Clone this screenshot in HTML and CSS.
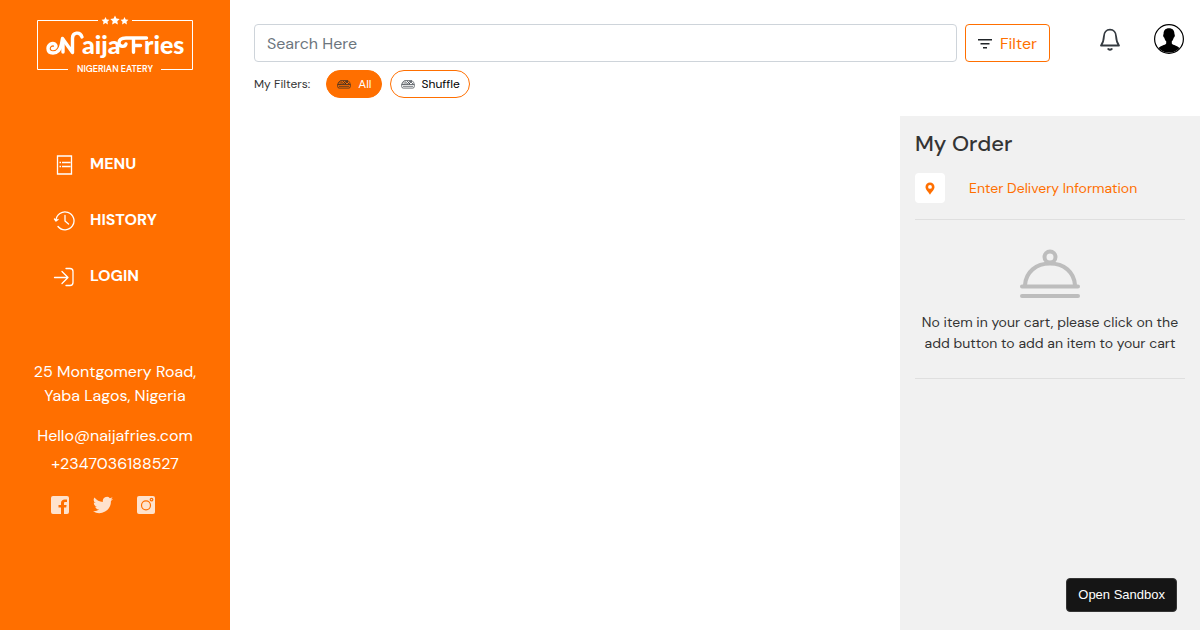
FILE: index.html
```html
<!DOCTYPE html>
<html lang="en">
<head>
  <meta charset="UTF-8">
  <meta name="viewport" content="width=device-width, initial-scale=1.0">
  <title>Naija Fries</title>
  <link rel="stylesheet" href="styles.css">
</head>
<body>
  <div class="app">
    <aside class="sidebar">
      <a class="logo" href="#" aria-label="Naija Fries">
        <svg width="156" height="62" viewBox="0 0 156 62" fill="none">
          <!-- Frame -->
          <path d="M61 5.500H.5V54.500H31M124 54.500H155.500V5.500H95" stroke="#fff"/>
          <!-- Stars -->
          <path fill="#fff" d="M78 .5l1.400 3 3.300.4-2.400 2.300.6 3.300-2.900-1.600-2.900 1.600.6-3.300-2.400-2.300 3.300-.4z"/>
          <path fill="#fff" d="M68.500 2l1.200 2.400 2.700.4-1.900 1.900.4 2.700-2.400-1.300-2.400 1.300.4-2.700-1.900-1.900 2.700-.4zM87.500 2l1.200 2.400 2.700.4-1.900 1.900.4 2.700-2.400-1.300-2.400 1.300.4-2.700-1.900-1.900 2.700-.4z"/>
          <!-- Swashes of the N and the F -->
          <g stroke="#fff" stroke-width="3.400" stroke-linecap="round" stroke-linejoin="round">
            <path d="M15.500 33.500c3 .3 4.500-2.500 2.500-4.300-3-2.200-7 .8-7 4.300 0 3.500 2.500 4.500 5 4.500 5 0 7.500-4 8.500-9l1-5.500 10 14V23c0-5.500 7.500-7 9.500-1"/>
            <path d="M26 25v12"/>
            <path d="M109.500 23H89c-4.500 0-7 2-7 5 0 4 6 4.500 7 1M96.500 24v13.300M97 30.500h6.500"/>
          </g>
          <text class="logo-name" x="45" y="39">aija</text>
          <text class="logo-name" x="107" y="39">ries</text>
          <text class="logo-sub" x="78" y="57" text-anchor="middle">NIGERIAN EATERY</text>
        </svg>
      </a>

      <nav class="nav">
        <a href="#">
          <svg width="22" height="22" viewBox="0 0 22 22" fill="none" stroke="currentColor" stroke-width="1.300"><path d="M4.500 3h14v18h-14zM9 9.500h8.500M9 13.500h8.500M6.500 9.500H8M6.500 13.500H8"/></svg>
          Menu
        </a>
        <a href="#">
          <svg width="22" height="22" viewBox="0 0 22 22" fill="none" stroke="currentColor" stroke-width="1.300" stroke-linecap="round" stroke-linejoin="round"><path d="M3 11.500a9 9 0 1 1 2 6M1.500 10L3 12l2-1.500M12 6.500v5.500l3.500 3"/></svg>
          History
        </a>
        <a href="#">
          <svg width="22" height="22" viewBox="0 0 22 22" fill="none" stroke="currentColor" stroke-width="1.300" stroke-linecap="round" stroke-linejoin="round"><path d="M1.500 12.500h13M9 6.500l6 6-6 6M13 3.500h4q3 0 3 3v11q0 3-3 3h-4"/></svg>
          Login
        </a>
      </nav>

      <address class="contact">
        <p>25 Montgomery Road,<br>Yaba Lagos, Nigeria</p>
        <a href="mailto:Hello@naijafries.com">Hello@naijafries.com</a>
        <a href="tel:+2347036188527">+2347036188527</a>
      </address>

      <div class="social">
        <a href="#" aria-label="Facebook">
          <svg width="20" height="20" viewBox="0 0 20 20"><path fill="currentColor" d="M3 1h14a2 2 0 0 1 2 2v14a2 2 0 0 1-2 2h-3v-6.500h2.200l.4-2.500H14V8.400c0-.9.400-1.400 1.400-1.400H17V4.500h-2.300C12.500 4.500 11 5.800 11 8v2H8.500v2.500H11V19H3a2 2 0 0 1-2-2V3a2 2 0 0 1 2-2z"/></svg>
        </a>
        <a href="#" aria-label="Twitter">
          <svg width="20" height="20" viewBox="0 0 24 24"><path fill="currentColor" d="M24 4.600a10 10 0 0 1-2.800.8 5 5 0 0 0 2.200-2.700 10 10 0 0 1-3.100 1.200 4.900 4.900 0 0 0-8.400 4.500A14 14 0 0 1 1.700 3.100a4.900 4.900 0 0 0 1.500 6.600 5 5 0 0 1-2.200-.6 4.900 4.900 0 0 0 3.900 4.900 5 5 0 0 1-2.200.1 4.900 4.900 0 0 0 4.600 3.400A9.900 9.900 0 0 1 0 19.500 14 14 0 0 0 21.500 7.100 10 10 0 0 0 24 4.600z"/></svg>
        </a>
        <a href="#" aria-label="Instagram">
          <svg width="20" height="20" viewBox="0 0 20 20"><rect x="1" y="1" width="18" height="18" rx="2" fill="currentColor"/><g fill="none" stroke="#ff6f00" stroke-width="1.200"><circle cx="10" cy="10.300" r="4.500"/><circle cx="15.500" cy="4.600" r="1.300"/></g></svg>
        </a>
      </div>
    </aside>

    <div class="main">
      <header class="topbar">
        <form class="search">
          <input type="search" placeholder="Search Here" aria-label="Search Here">
          <button type="button" class="filter-btn">
            <svg width="16" height="16" viewBox="0 0 16 16" stroke="#212529" stroke-width="1.500"><path d="M1 4.700h14M3.500 8.700h9M6 12.700h4"/></svg>
            Filter
          </button>
        </form>
        <div class="user">
          <button type="button" class="icon-btn" aria-label="Notifications">
            <svg width="22" height="24" viewBox="0 0 22 24" fill="none" stroke="#343a40" stroke-width="1.800" stroke-linecap="round" stroke-linejoin="round"><path d="M2 18.500h18c-2-2.500-2.700-5-2.900-9C17 5.500 14.500 2.700 11 2.700S5 5.500 4.900 9.500C4.700 13.500 4 16 2 18.500zM9.200 22q1.800 1.400 3.600 0"/></svg>
          </button>
          <button type="button" class="icon-btn" aria-label="Account">
            <svg width="30" height="30" viewBox="0 0 30 30"><circle cx="15" cy="15" r="14.400" fill="#fff" stroke="#000" stroke-width="1.200"/><path d="M15 4.300c-3.800 0-5.700 2.500-5.400 6-.8.200-.5 2.900.7 3.400.3 1.600 1 2.700 1.900 3.600v2.300c-1.500 1.900-5.400 1.900-7.700 4.500a14.500 14.500 0 0 0 21 0c-2.300-2.600-6.200-2.600-7.700-4.500v-2.300c.9-.9 1.600-2 1.900-3.600 1.200-.5 1.500-3.200.7-3.400.3-3.500-1.600-6-5.400-6z"/></svg>
          </button>
        </div>
      </header>

      <div class="filters">
        <span class="filters-label">My Filters:</span>
        <button type="button" class="chip active">
          <svg width="14" height="10" viewBox="0 0 14 10" fill="none" stroke="#212529" stroke-width=".7"><path d="M.7 5.500Q1 3 3.500 1.600h7.500Q13 3 13.300 5.500zM.7 5.500v2q0 1.600 1.500 1.600h9.600q1.500 0 1.500-1.600v-2M2 7.300h10M2 4.500l2-2 2.500 2.500 2.500-3 3 3M3 5.500l2-2M6 2l3 3M8 5l3-3"/></svg>
          All
        </button>
        <button type="button" class="chip">
          <svg width="14" height="10" viewBox="0 0 14 10" fill="none" stroke="#343a40" stroke-width=".7"><path d="M.7 5.500Q1 3 3.500 1.600h7.500Q13 3 13.300 5.500zM.7 5.500v2q0 1.600 1.500 1.600h9.600q1.500 0 1.500-1.600v-2M2 7.300h10M2 4.500l2-2 2.500 2.500 2.500-3 3 3M3 5.500l2-2M6 2l3 3M8 5l3-3"/></svg>
          Shuffle
        </button>
      </div>

      <div class="content">
        <main class="products"></main>
        <section class="order">
          <h1>My Order</h1>
          <div class="delivery">
            <span class="pin">
              <svg width="10" height="13" viewBox="0 0 10 13"><path fill="#ff6f00" fill-rule="evenodd" d="M5 .5A4.500 4.500 0 0 0 .5 5C.5 8 3.500 10 5 12.700 6.500 10 9.500 8 9.500 5A4.500 4.500 0 0 0 5 .5zM5 3a1.900 1.900 0 1 1 0 3.800A1.900 1.900 0 0 1 5 3z"/></svg>
            </span>
            <a href="#">Enter Delivery Information</a>
          </div>
          <div class="empty-cart">
            <svg width="60" height="50" viewBox="0 0 60 50" fill="none" stroke="#bdbdbd" stroke-width="4" stroke-linecap="round"><path d="M2 37.500h56M2 47h56M5 36C6 23 16 14.500 30 14.500S54 23 55 36"/><circle cx="30" cy="8" r="5.500"/></svg>
            <p>No item in your cart, please click on the add button to add an item to your cart</p>
          </div>
        </section>
      </div>
    </div>
  </div>

  <button type="button" class="sandbox-btn">Open Sandbox</button>
</body>
</html>
```

FILE: styles.css
```css
* { box-sizing: border-box; }
body {
  margin: 0;
  font-family: "DM Sans", Inter, sans-serif;
  font-size: 16px;
  line-height: 24px;
  color: #343434;
  background: #fff;
}
a { color: inherit; text-decoration: none; }
button, input { font-family: inherit; }
button { cursor: pointer; }
svg { display: block; flex-shrink: 0; }

.app { display: flex; min-height: 100vh; }

/* sidebar */
.sidebar {
  width: 230px;
  flex-shrink: 0;
  padding-top: 15px;
  background: #ff6f00;
  color: #fff;
}
.logo { display: flex; justify-content: center; }
.logo-name {
  font: 900 25px Lato, sans-serif;
  fill: #fff;
}
.logo-sub {
  font: 600 9px "DM Sans", Lato, sans-serif;
  fill: #fff;
}
.nav {
  display: flex;
  flex-direction: column;
  gap: 32px;
  padding: 75px 0 0 53px;
}
.nav a {
  display: flex;
  align-items: center;
  gap: 15px;
  font-weight: 700;
  text-transform: uppercase;
}
.contact {
  display: flex;
  flex-direction: column;
  align-items: center;
  gap: 4px;
  margin-top: 72px;
  font-style: normal;
  text-align: center;
}
.contact p { margin: 0 0 12px; }
.social {
  display: flex;
  gap: 23px;
  padding: 19px 0 0 50px;
  color: #ffe2cc;
}

/* top bar */
.main {
  flex: 1;
  min-width: 0;
  display: flex;
  flex-direction: column;
}
.topbar {
  display: flex;
  align-items: flex-start;
  gap: 49px;
  padding: 24px 16px 0 24px;
}
.search {
  flex: 1;
  display: flex;
  gap: 8px;
}
.search input {
  flex: 1;
  min-width: 0;
  height: 38px;
  padding: 6px 12px;
  border: 1px solid #ced4da;
  border-radius: 4px;
  font-size: 16px;
  background: #fff;
}
.search input::placeholder { color: #6c757d; }
.filter-btn {
  display: flex;
  align-items: center;
  gap: 7px;
  padding: 0 12px 0 11px;
  border: 1px solid #ff6f00;
  border-radius: 4px;
  background: #fff;
  color: #ff6f00;
  font-size: 16px;
}
.user {
  display: flex;
  align-items: center;
  gap: 33px;
}
.icon-btn {
  padding: 0;
  border: 0;
  background: none;
}

.filters {
  display: flex;
  align-items: center;
  gap: 8px;
  padding: 8px 24px 18px;
  font-size: 12px;
}
.filters-label { margin-right: 8px; }
.chip {
  display: flex;
  align-items: center;
  gap: 7px;
  height: 28px;
  padding: 0 9px 0 10px;
  border: 1px solid #ff6f00;
  border-radius: 14px;
  background: #fff;
  color: #000;
  font-size: 12px;
}
.chip.active {
  background: #ff6f00;
  color: #fff;
}

/* order panel */
.content { flex: 1; display: flex; }
.products { flex: 1; }
.order {
  width: 300px;
  padding: 15px;
  background: #f1f1f1;
}
.order h1 {
  margin: 0;
  font-size: 22px;
  font-weight: 500;
  line-height: 26px;
}
.delivery {
  display: flex;
  align-items: center;
  gap: 24px;
  padding: 16px 0;
  border-bottom: 1px solid #dfdfdf;
  color: #ff6f00;
  font-size: 14px;
}
.pin {
  display: flex;
  align-items: center;
  justify-content: center;
  width: 30px;
  height: 30px;
  border-radius: 4px;
  background: #fff;
}
.empty-cart {
  display: flex;
  flex-direction: column;
  align-items: center;
  gap: 13px;
  padding: 29px 0 24px;
  border-bottom: 1px solid #dfdfdf;
  font-size: 14px;
  line-height: 21px;
  text-align: center;
}
.empty-cart p { margin: 0; }

.sandbox-btn {
  position: fixed;
  right: 23px;
  bottom: 18px;
  height: 34px;
  padding: 0 11px 2px;
  border: 1px solid #343434;
  border-radius: 4px;
  background: #151515;
  color: #fff;
  font-family: "Liberation Sans", Arial, sans-serif;
  font-size: 13px;
}
```
